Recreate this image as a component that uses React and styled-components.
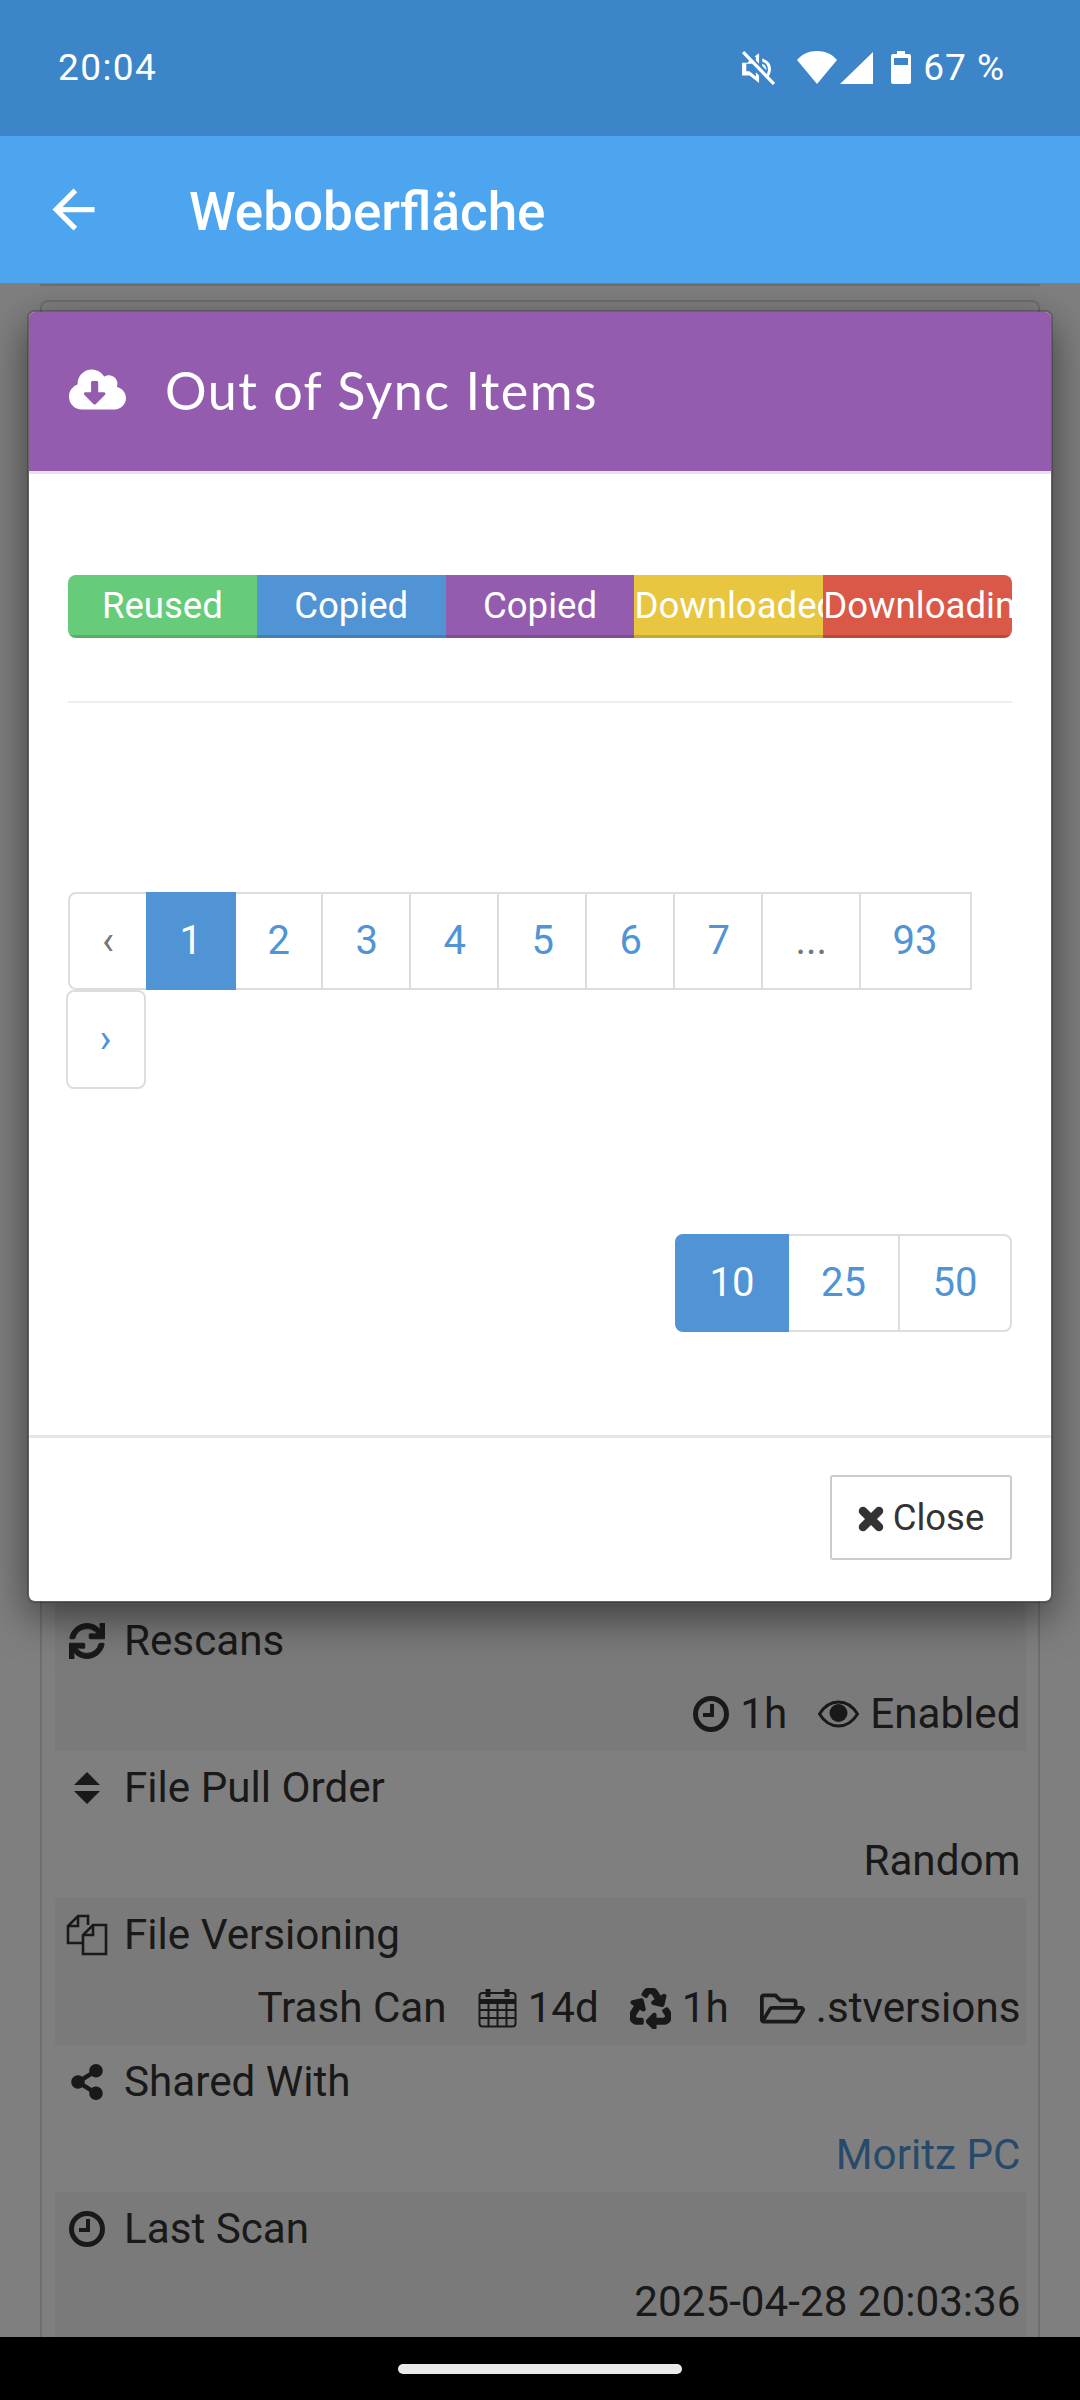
import React from "react";
import styled, { createGlobalStyle } from "styled-components";
import { FaCloudDownloadAlt, FaSync, FaShareAlt, FaRecycle, FaRegFolderOpen } from "react-icons/fa";
import { MdArrowBack } from "react-icons/md";

const Global = createGlobalStyle`
  html, body { margin: 0; padding: 0; background: #000; }
  * { box-sizing: border-box; }
`;

const Screen = styled.div`
  width: 1080px;
  height: 2400px;
  display: flex;
  flex-direction: column;
  overflow: hidden;
  font-family: Roboto, "Liberation Sans", sans-serif;
`;

const StatusBar = styled.div`
  height: 136px;
  flex: none;
  background: #3d85c9;
  color: #fff;
  display: flex;
  align-items: center;
  justify-content: space-between;
  padding: 0 75px 1px 58px;
  font-size: 37px;
`;
const Clock = styled.span`
  letter-spacing: 1.4px;
`;
const StatusIcons = styled.div`
  display: flex;
  align-items: center;
  svg { display: block; fill: #fff; }
`;
const Percent = styled.span`
  margin-left: 12px;
  letter-spacing: 1px;
`;

const AppBar = styled.div`
  height: 147px;
  flex: none;
  background: #4ca5ee;
  color: #fff;
  display: flex;
  align-items: center;
  padding-left: 42px;
`;
const BackArrow = styled(MdArrowBack)`
  width: 63px;
  height: 63px;
  margin-right: 84px;
`;
const Title = styled.div`
  font-size: 53px;
  font-weight: 500;
  padding-top: 4px;
`;

const WebView = styled.div`
  flex: 1;
  position: relative;
  overflow: hidden;
  background: #fff;
  color: #333;
  font-size: 42.2px;
`;

const PanelStub = styled.div`
  height: 3px;
  margin: 0 40px 14px;
  border-bottom: 2px solid #ddd;
`;
const Panel = styled.div`
  margin: 0 40px;
  padding: 0 12px 0 13px;
  border: 2px solid #ddd;
  border-bottom: 0;
  border-radius: 8px 8px 0 0;
`;
const HiddenPart = styled.div`
  height: 1302px;
`;
const Row = styled.div`
  height: 147px;
  padding: 0 5.5px 0 7px;
  line-height: 73.4px;
  background: ${p => (p.$striped ? "#f5f5f5" : "transparent")};
`;
const Label = styled.div`
  display: flex;
  align-items: center;
`;
const IconSlot = styled.span`
  width: 50px;
  margin-right: 12px;
  display: flex;
  justify-content: center;
`;
const Value = styled.div`
  display: flex;
  justify-content: flex-end;
  align-items: center;
  white-space: nowrap;
`;
const ValuePart = styled.span`
  display: flex;
  align-items: center;
  margin-left: 31px;
  svg { margin-right: 11px; }
`;
const Link = styled.a`
  color: #5094d5;
  text-decoration: none;
`;
const Size36 = styled.svg`
  width: 36px;
  height: 36px;
  display: block;
  fill: #333;
`;
const RefreshIcon = styled(FaSync)`
  width: 36px;
  height: 36px;
  path { stroke: #333; stroke-width: 14px; }
`;
const ShareIcon = styled(FaShareAlt)`
  width: 36px;
  height: 36px;
`;
const RecycleIcon = styled(FaRecycle)`
  width: 41px;
  height: 41px;
  path { stroke: #333; stroke-width: 24px; }
`;
const FolderIcon = styled(FaRegFolderOpen)`
  width: 45px;
  height: 45px;
`;

const Backdrop = styled.div`
  position: absolute;
  inset: 0;
  background: rgba(0, 0, 0, 0.5);
`;
const Dialog = styled.div`
  position: absolute;
  top: 27px;
  left: 27px;
  width: 1026px;
  height: 1293px;
  background: #fff;
  background-clip: padding-box;
  border: 2px solid rgba(0, 0, 0, 0.2);
  border-radius: 8px;
  box-shadow: 0 14px 41px rgba(0, 0, 0, 0.5);
  display: flex;
  flex-direction: column;
`;
const DialogHeader = styled.div`
  height: 162px;
  flex: none;
  background: #935cae;
  border-bottom: 3px solid #e5e5e5;
  border-radius: 6px 6px 0 0;
  color: #fff;
  display: flex;
  align-items: center;
  padding: 0 0 4px 40px;
`;
const CloudIcon = styled(FaCloudDownloadAlt)`
  width: 57px;
  height: 57px;
  margin-right: 39px;
`;
const DialogTitle = styled.h4`
  margin: 0;
  font-family: Lato, sans-serif;
  font-size: 52px;
  font-weight: 400;
  letter-spacing: 1.5px;
`;
const DialogBody = styled.div`
  flex: 1;
  padding: 101px 39px 0;
  font-size: 40px;
`;
const Progress = styled.div`
  height: 63px;
  display: flex;
  border-radius: 8px;
  overflow: hidden;
`;
const Segment = styled.div`
  width: 20%;
  overflow: hidden;
  white-space: nowrap;
  text-align: center;
  color: #fff;
  font-size: 36.6px;
  line-height: 62px;
  background: ${p => p.$color};
  box-shadow: inset 0 -3px 0 rgba(0, 0, 0, 0.15);
`;
const Divider = styled.hr`
  border: 0;
  border-top: 2.5px solid #eee;
  margin: 62.5px 0 189px;
`;
const Pager = styled.div`
  display: flex;
  flex-wrap: wrap;
`;
const PageCell = styled.a`
  height: 98.5px;
  line-height: 93px;
  padding: 0 32px;
  margin-left: -2.5px;
  border: 2.5px solid ${p => (p.$active ? "#5094d5" : "#ddd")};
  background: ${p => (p.$active ? "#5094d5" : "#fff")};
  color: ${p => (p.$active ? "#fff" : p.$muted ? "#777" : "#5094d5")};
  position: relative;
  z-index: ${p => (p.$active ? 2 : 1)};
  &:first-child { margin-left: 0; border-radius: 8px 0 0 8px; }
  &:last-child { border-radius: 0 8px 8px 0; }
`;
const NextCell = styled(PageCell)`
  &:last-child { border-radius: 8px; }
`;
const SizeCell = styled(PageCell)`
  padding: 0 32.5px;
`;
const SizeGroup = styled(Pager)`
  justify-content: flex-end;
  margin-top: 145px;
`;
const DialogFooter = styled.div`
  flex: none;
  border-top: 3px solid #e5e5e5;
  padding: 37px 39px 41px;
  display: flex;
  justify-content: flex-end;
`;
const CloseButton = styled.button`
  width: 182px;
  height: 85px;
  padding: 0;
  background: #fff;
  border: 2.5px solid #ccc;
  border-radius: 3px;
  color: #333;
  font-family: inherit;
  font-size: 36.5px;
  display: flex;
  align-items: center;
  justify-content: center;
`;
const CloseIcon = styled.svg`
  width: 26px;
  height: 26px;
  margin: 2px 9px 0 0;
  stroke: #333;
  stroke-width: 8.5;
  stroke-linecap: round;
`;

const NavBar = styled.div`
  height: 63px;
  flex: none;
  background: #000;
  display: flex;
  justify-content: center;
  padding-top: 27px;
`;
const NavPill = styled.div`
  width: 284px;
  height: 10px;
  border-radius: 5px;
  background: #eaeaea;
`;

function MuteIcon() {
  return (
    <svg width="34" height="34" viewBox="1 1 32 32">
      <path fillRule="evenodd" d="M2 12h5l2-2 3 3-3 0H6v7h3l6 5v-4l3 3v7l-9-7H2zM14 6l4-3v10l-3-3V7zM21 8c6 2 9 6 8 12a12 12 0 0 1-2 5l-2-2c3-5 1-11-4-12zM21 13c3 1 4 3 4 6l-4-4z" />
      <path d="M3 2 32 32" stroke="#fff" strokeWidth="3" />
    </svg>
  );
}
function WifiIcon() {
  return (
    <svg width="40" height="33" viewBox="0 0 40 33" style={{ marginLeft: 22 }}>
      <path d="M20 33 0 9C5 3 12 0 20 0s15 3 20 9z" />
    </svg>
  );
}
function SignalIcon() {
  return (
    <svg width="33" height="32" viewBox="0 0 33 32" style={{ marginLeft: 3 }}>
      <path d="M33 0v32H0z" />
    </svg>
  );
}
function BatteryIcon() {
  return (
    <svg width="20" height="33" viewBox="0 0 20 33" style={{ marginLeft: 18 }}>
      <path fillRule="evenodd" d="M6 0h8v3h4a2 2 0 0 1 2 2v26a2 2 0 0 1-2 2H2a2 2 0 0 1-2-2V5a2 2 0 0 1 2-2h4zM3 7v7h14V7z" />
    </svg>
  );
}
function ClockIcon() {
  return (
    <Size36 viewBox="0 0 36 36">
      <circle cx="18" cy="18" r="15.5" fill="none" stroke="#333" strokeWidth="5" />
      <path d="M17 8h4v13H10v-4h7z" />
    </Size36>
  );
}
function SortIcon() {
  return (
    <Size36 viewBox="0 0 36 36">
      <path d="M18 2 31 15H5zM5 21h26L18 34z" />
    </Size36>
  );
}
function FilesIcon() {
  return (
    <svg width="42" height="42" viewBox="0 0 42 42" fill="none" stroke="#333" strokeWidth="2.6">
      <path d="M17 29H2V12L12 2h10v9" />
      <path d="M12 2v10H2" />
      <path d="M17 40V21l10-10h13v29zM27 11v10H17" />
    </svg>
  );
}
function CalendarIcon() {
  return (
    <svg width="39" height="40" viewBox="0 0 39 40" fill="none" stroke="#333" strokeWidth="2">
      <rect x="1.5" y="5" width="36" height="33.5" rx="3" />
      <path d="M1.5 13.5h36" strokeWidth="5" />
      <path d="M1.5 22h36M1.5 30h36M10.5 14v24M19.5 14v24M28.5 14v24" />
      <path d="M10 1v8M29 1v8" strokeWidth="5" />
    </svg>
  );
}
function EyeIcon() {
  return (
    <svg width="41" height="28" viewBox="0 0 41 28" fill="none" stroke="#333" strokeWidth="3">
      <path d="M1.5 14C7 5 14 2 20.5 2S34 5 39.5 14C34 23 27 26 20.5 26S7 23 1.5 14z" />
      <circle cx="20.5" cy="13" r="9" fill="#333" stroke="none" />
    </svg>
  );
}

function Info({ icon, label, striped, children }) {
  return (
    <Row $striped={striped}>
      <Label>
        <IconSlot>{icon}</IconSlot>
        {label}
      </Label>
      <Value>{children}</Value>
    </Row>
  );
}

const segments = [
  ["Reused", "#66cc7a"],
  ["Copied", "#5094d5"],
  ["Copied", "#935cae"],
  ["Downloaded", "#e9c640"],
  ["Downloading", "#d95847"],
];

export default function App() {
  return (
    <Screen>
      <Global />
      <StatusBar>
        <Clock>20:04</Clock>
        <StatusIcons>
          <MuteIcon />
          <WifiIcon />
          <SignalIcon />
          <BatteryIcon />
          <Percent>67 %</Percent>
        </StatusIcons>
      </StatusBar>
      <AppBar>
        <BackArrow />
        <Title>Weboberfläche</Title>
      </AppBar>
      <WebView>
        <PanelStub />
        <Panel>
          <HiddenPart />
          <Info striped icon={<RefreshIcon />} label="Rescans">
            <ValuePart><ClockIcon />1h</ValuePart>
            <ValuePart><EyeIcon />Enabled</ValuePart>
          </Info>
          <Info icon={<SortIcon />} label="File Pull Order">Random</Info>
          <Info striped icon={<FilesIcon />} label="File Versioning">
            Trash Can
            <ValuePart><CalendarIcon />14d</ValuePart>
            <ValuePart><RecycleIcon />1h</ValuePart>
            <ValuePart><FolderIcon />.stversions</ValuePart>
          </Info>
          <Info icon={<ShareIcon />} label="Shared With"><Link>Moritz PC</Link></Info>
          <Info striped icon={<ClockIcon />} label="Last Scan">2025-04-28 20:03:36</Info>
        </Panel>
        <Backdrop />
        <Dialog>
          <DialogHeader>
            <CloudIcon />
            <DialogTitle>Out of Sync Items</DialogTitle>
          </DialogHeader>
          <DialogBody>
            <Progress>
              {segments.map(([text, color], i) => (
                <Segment key={i} $color={color}>{text}</Segment>
              ))}
            </Progress>
            <Divider />
            <Pager>
              <PageCell $muted>‹</PageCell>
              <PageCell $active>1</PageCell>
              {[2, 3, 4, 5, 6, 7].map(n => <PageCell key={n}>{n}</PageCell>)}
              <PageCell $muted>...</PageCell>
              <PageCell>93</PageCell>
              <NextCell>›</NextCell>
            </Pager>
            <SizeGroup>
              <SizeCell $active>10</SizeCell>
              <SizeCell>25</SizeCell>
              <SizeCell>50</SizeCell>
            </SizeGroup>
          </DialogBody>
          <DialogFooter>
            <CloseButton>
              <CloseIcon viewBox="0 0 26 26"><path d="M5 5 21 21M21 5 5 21" /></CloseIcon>
              Close
            </CloseButton>
          </DialogFooter>
        </Dialog>
      </WebView>
      <NavBar><NavPill /></NavBar>
    </Screen>
  );
}
